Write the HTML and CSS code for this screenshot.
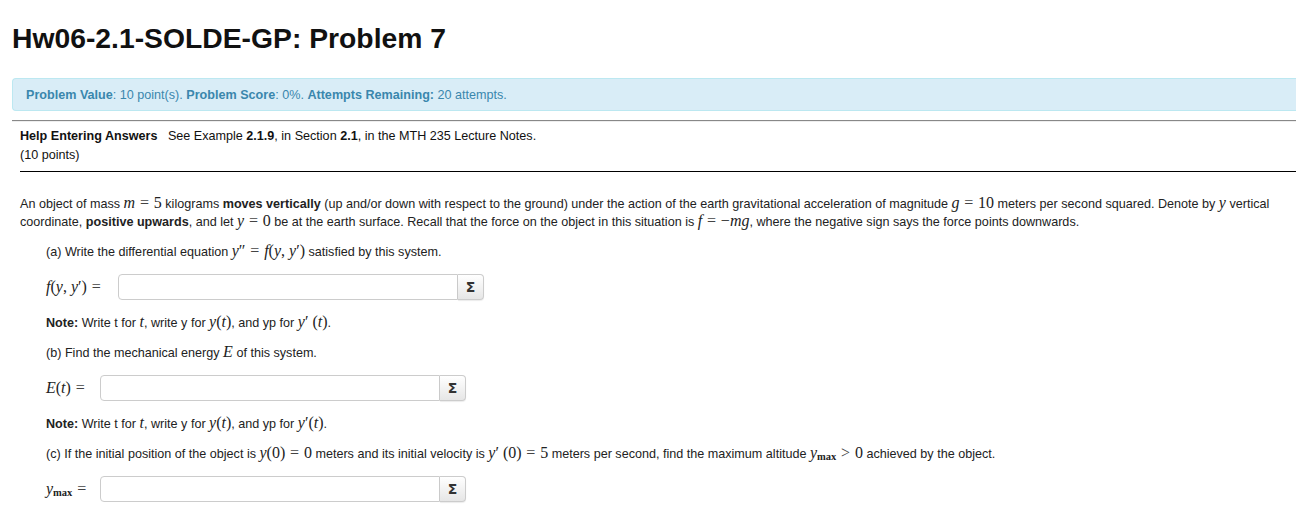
FILE: index.html
```html
<!DOCTYPE html>
<html>
<head>
<meta charset="utf-8">
<link rel="stylesheet" href="styles.css">
</head>
<body>
<div class="page">
  <h1 class="title">Hw06-2.1-SOLDE-GP: Problem 7</h1>
  <div class="alert">
    <b>Problem Value</b>: 10 point(s). <b>Problem Score</b>: 0%. <b>Attempts Remaining:</b> 20 attempts.
  </div>
  <div class="help">
    <div><b>Help Entering Answers</b>&nbsp;&nbsp; See Example <b>2.1.9</b>, in Section <b>2.1</b>, in the MTH 235 Lecture Notes.</div>
    <div>(10 points)</div>
  </div>
  <div class="problem">
    <p class="intro">An object of mass <span class="m"><i>m</i><span class="r">=</span>5</span> kilograms <b>moves vertically</b> (up and/or down with respect to the ground) under the action of the earth gravitational acceleration of magnitude <span class="m"><i>g</i><span class="r">=</span>10</span> meters per second squared. Denote by <span class="m"><i>y</i></span> vertical<br>coordinate, <b>positive upwards</b>, and let <span class="m"><i>y</i><span class="r">=</span>0</span> be at the earth surface. Recall that the force on the object in this situation is <span class="m"><i>f</i><span class="r">=</span>−<i>mg</i></span>, where the negative sign says the force points downwards.</p>
    <div class="part">
      <p>(a) Write the differential equation <span class="m"><i>y</i>″<span class="r">=</span><i>f</i>(<i>y</i>, <i>y</i>′)</span> satisfied by this system.</p>
      <div class="answer">
        <span class="label m"><i>f</i>(<i>y</i>, <i>y</i>′)<span class="r">=</span></span>
        <span class="field"><span class="input"></span><span class="sigma">Σ</span></span>
      </div>
      <p><b>Note:</b> Write t for <span class="m"><i>t</i></span>, write y for <span class="m"><i>y</i>(<i>t</i>)</span>, and yp for <span class="m"><i>y</i>′ (<i>t</i>)</span>.</p>
      <p>(b) Find the mechanical energy <span class="m"><i>E</i></span> of this system.</p>
      <div class="answer">
        <span class="label short m"><i>E</i>(<i>t</i>)<span class="r">=</span></span>
        <span class="field"><span class="input"></span><span class="sigma">Σ</span></span>
      </div>
      <p><b>Note:</b> Write t for <span class="m"><i>t</i></span>, write y for <span class="m"><i>y</i>(<i>t</i>)</span>, and yp for <span class="m"><i>y</i>′(<i>t</i>)</span>.</p>
      <p>(c) If the initial position of the object is <span class="m"><i>y</i>(0)<span class="r">=</span>0</span> meters and its initial velocity is <span class="m"><i>y</i>′ (0)<span class="r">=</span>5</span> meters per second, find the maximum altitude <span class="m"><i>y</i><sub>max</sub><span class="r gt">&gt;</span>0</span> achieved by the object.</p>
      <div class="answer">
        <span class="label short m"><i>y</i><sub>max</sub><span class="r">=</span></span>
        <span class="field"><span class="input"></span><span class="sigma">Σ</span></span>
      </div>
    </div>
  </div>
</div>
</body>
</html>
```

FILE: styles.css
```css
html, body {
  margin: 0;
  padding: 0;
  background: #fff;
}
body {
  font-family: "Liberation Sans", Arial, sans-serif;
  font-size: 12.6px;
  color: #333;
}
.page {
  padding-left: 12px;
}
.title {
  margin: 22px 0 0 0;
  font-size: 28.3px;
  line-height: 32px;
  font-weight: bold;
  color: #111;
}
.alert {
  margin-top: 24px;
  background: #d9edf7;
  border: 1px solid #bce8f1;
  border-right: none;
  border-radius: 4px 0 0 4px;
  color: #3a87ad;
  padding: 9px 13px 7px 13px;
  line-height: 15px;
}
.help {
  margin-top: 9px;
  border-top: 1px solid #888;
  box-shadow: inset 0 1px 0 #eee;
  padding: 6px 0 6px 8px;
  line-height: 19px;
  color: #111;
}
.help::after {
  content: "";
  display: block;
  height: 1px;
  background: #000;
  margin-top: 6px;
}
.problem {
  padding-left: 8px;
  padding-top: 17px;
  color: #222;
}
p {
  margin: 0 0 12px 0;
  line-height: 18px;
}
.intro {
  margin-right: 6px;
}
.part {
  padding-left: 26px;
}
.m {
  font-family: "Liberation Serif", "Times New Roman", serif;
  font-size: 16px;
  line-height: 14px;
}
.m i {
  font-style: italic;
}
.r {
  margin: 0 0.3em;
  color: #444;
}
.m sub {
  font-size: 10.5px;
  font-weight: bold;
  vertical-align: -2px;
  line-height: 0;
}
.answer {
  display: flex;
  align-items: center;
  margin: 13px 0 14px 0;
  height: 26px;
}
.label {
  width: 72px;
  color: #222;
  line-height: 26px;
}
.label.short {
  width: 54px;
}
.field {
  display: flex;
}
.input {
  width: 338px;
  height: 24px;
  border: 1px solid #ccc;
  border-radius: 4px 0 0 4px;
  background: #fff;
}
.sigma {
  width: 25px;
  height: 24px;
  border: 1px solid #ccc;
  border-left: none;
  border-radius: 0 4px 4px 0;
  background: linear-gradient(#fff, #e6e6e6);
  box-shadow: 0 1px 1px rgba(0,0,0,0.08);
  display: flex;
  align-items: center;
  justify-content: center;
  font-weight: bold;
  font-size: 14px;
  color: #333;
  font-family: "DejaVu Sans", sans-serif;
}
```
